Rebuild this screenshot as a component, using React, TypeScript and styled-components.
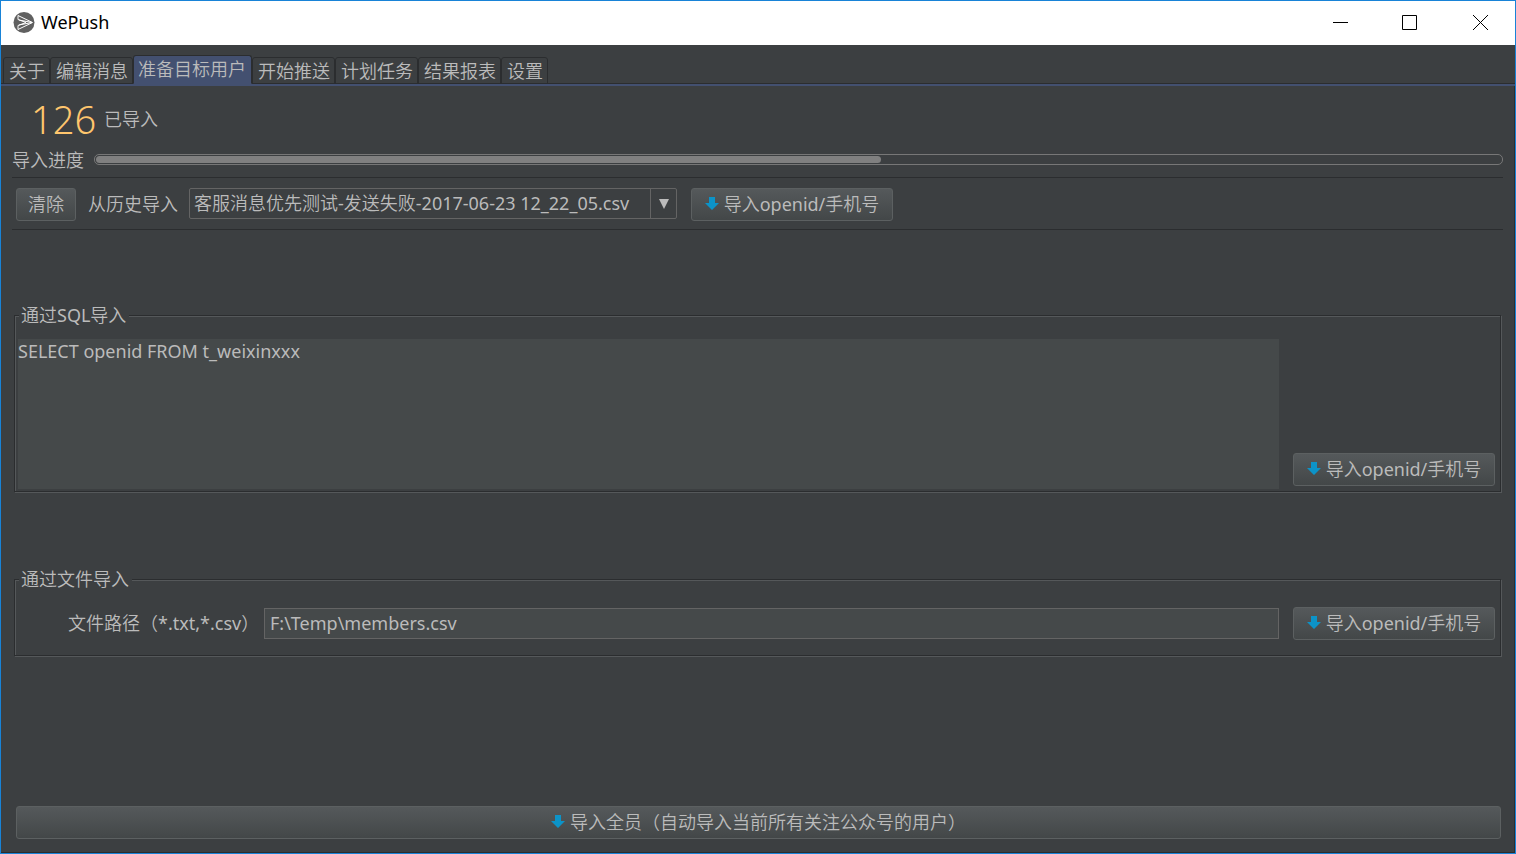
import React, { useState } from "react";
import styled, { createGlobalStyle, css } from "styled-components";

const FONT = `"Noto Sans", "Noto Sans CJK SC DemiLight", "Noto Sans CJK SC", sans-serif`;

const color = {
  frame: "#1883d7",
  bg: "#3c3f41",
  dark: "#2b2d2f",
  light: "#55585a",
  text: "#bbbbbb",
  accent: "#435070",
  count: "#ffc66d",
  field: "#45494a",
  fieldBorder: "#646464",
  buttonBorder: "#5c6061",
  blue: "#0c93c8",
};

const GlobalStyle = createGlobalStyle`
  * { box-sizing: border-box; }
  body { margin: 0; background: ${color.bg}; }
  body, button, input, select, textarea {
    font-family: ${FONT};
    font-size: 18px;
    font-weight: 400;
    line-height: 24px;
    color: ${color.text};
  }
`;

const Window = styled.div`
  display: flex;
  flex-direction: column;
  min-height: 100vh;
  border: 1px solid ${color.frame};
  background: ${color.bg};
`;

const TitleBar = styled.header`
  display: flex;
  align-items: center;
  height: 44px;
  padding-left: 12px;
  background: #ffffff;
  color: #000000;
`;

const Title = styled.h1`
  flex: 1;
  margin: 0 0 0 6px;
  padding-bottom: 2px;
  font-size: 18px;
  font-weight: 400;
  line-height: 24px;
`;

const WindowButton = styled.button`
  display: flex;
  align-items: center;
  justify-content: center;
  width: 70px;
  height: 44px;
  padding: 0;
  border: 0;
  background: transparent;
`;

const TabBar = styled.nav`
  display: flex;
  align-items: flex-end;
  height: 41px;
  padding-left: 2px;
  border-bottom: 2px solid ${color.accent};
  box-shadow: inset 0 -1px 0 ${color.dark};
`;

const Tab = styled.button<{ $active: boolean }>`
  height: 27px;
  padding: 0 4px 0 5px;
  border: 1px solid ${color.dark};
  border-radius: 3px 3px 0 0;
  background: transparent;
  white-space: nowrap;
  ${(p) =>
    p.$active &&
    css`
      height: 29px;
      padding: 0 5px 2px 4px;
      border-bottom-color: ${color.accent};
      background: ${color.accent};
    `}
`;

const Body = styled.main`
  display: flex;
  flex: 1;
  flex-direction: column;
  padding: 0 11px 13px;
  border: solid ${color.dark};
  border-width: 0 1px 1px 0;
`;

const CountRow = styled.div`
  display: flex;
  align-items: center;
  gap: 8px;
  height: 66px;
  padding-left: 19px;
`;

const Count = styled.strong`
  color: ${color.count};
  font-size: 38px;
  font-weight: 350;
  line-height: 48px;
`;

const ProgressRow = styled.label`
  display: flex;
  align-items: center;
  gap: 10px;
  height: 16px;
  margin-bottom: 9px;
  white-space: nowrap;
`;

const Progress = styled.progress`
  flex: 1;
  min-width: 0;
  height: 11px;
  margin-bottom: 1px;
  padding: 1px;
  border: 1px solid #777777;
  border-radius: 5px;
  background: transparent;
  appearance: none;

  &::-webkit-progress-bar {
    background: transparent;
  }
  &::-webkit-progress-value {
    border-radius: 4px;
    background: #808080;
  }
`;

const Toolbar = styled.div`
  display: flex;
  align-items: center;
  padding: 10px 4px 8px;
  border: solid ${color.dark};
  border-width: 1px 0;
`;

const Button = styled.button<{ $wide?: boolean }>`
  display: flex;
  align-items: center;
  justify-content: center;
  gap: 5px;
  min-width: ${(p) => (p.$wide ? "202px" : "0")};
  height: 33px;
  padding: 0 11px 2px;
  border: 1px solid ${color.buttonBorder};
  border-radius: 3px;
  background: linear-gradient(#55595b, #434748);
  white-space: nowrap;
`;

const HistoryLabel = styled.label`
  margin: 0 11px 0 12px;
  padding-bottom: 2px;
  white-space: nowrap;
`;

const SelectBox = styled.div`
  position: relative;
  width: 488px;
  height: 31px;
  margin: 0 14px 2px 0;
`;

const Select = styled.select`
  width: 100%;
  height: 100%;
  padding: 0 27px 2px 4px;
  border: 1px solid ${color.fieldBorder};
  border-radius: 2px;
  background: ${color.bg};
  appearance: none;
`;

const SelectArrow = styled.span`
  position: absolute;
  top: 1px;
  right: 1px;
  bottom: 1px;
  display: flex;
  align-items: center;
  justify-content: center;
  width: 26px;
  border-left: 1px solid ${color.fieldBorder};
  pointer-events: none;
`;

const Group = styled.fieldset<{ $space: string; $padding: string }>`
  display: flex;
  min-width: 0;
  margin: ${(p) => p.$space};
  padding: ${(p) => p.$padding};
  border: 1px solid ${color.dark};
  box-shadow: inset 1px 1px 0 ${color.light}, 1px 1px 0 ${color.light};
`;

const Legend = styled.legend`
  margin-left: 3px;
  padding: 0 3px 0 2px;
  background: ${color.bg};
  line-height: 20px;
`;

const GroupRow = styled.div<{ $align: string }>`
  display: flex;
  flex: 1;
  align-items: ${(p) => p.$align};
  gap: 14px;
`;

const SqlArea = styled.textarea`
  flex: 1;
  min-width: 0;
  height: 150px;
  margin-left: 2px;
  padding: 0;
  border: 0;
  background: ${color.field};
  resize: none;
`;

const SqlAction = styled.div`
  padding-bottom: 3px;
`;

const PathField = styled.div`
  display: flex;
  flex: 1;
  align-items: center;
  min-width: 0;
`;

const PathLabel = styled.label`
  width: 248px;
  padding: 0 0 2px 52px;
  white-space: nowrap;
`;

const PathInput = styled.input`
  flex: 1;
  min-width: 0;
  height: 31px;
  padding: 0 5px 2px;
  border: 1px solid ${color.fieldBorder};
  background: ${color.field};
`;

const AllUsers = styled.div`
  display: grid;
  margin: auto 2px 0 4px;
`;

const DownIcon = () => (
  <svg width="14" height="14" viewBox="0 0 14 14" aria-hidden="true">
    <path d="M4 0h6v6h4L7 13 0 6h4z" fill={color.blue} />
  </svg>
);

const Logo = () => (
  <svg width="22" height="22" viewBox="0 0 22 22" aria-hidden="true">
    <circle cx="11" cy="10.5" r="10.5" fill="#606060" />
    <path
      d="M5 3.5 19.5 10.5 5 17.5V13.5L13 10.5 5 7.5ZM6 8 19 10.5 6 13"
      fill="none"
      stroke="#ffffff"
      strokeWidth="1"
    />
  </svg>
);

const TABS = ["关于", "编辑消息", "准备目标用户", "开始推送", "计划任务", "结果报表", "设置"];

const ImportButton = () => (
  <Button type="button" $wide>
    <DownIcon />
    导入openid/手机号
  </Button>
);

export default function App() {
  const [active, setActive] = useState("准备目标用户");
  return (
    <>
      <GlobalStyle />
      <Window>
        <TitleBar>
          <Logo />
          <Title>WePush</Title>
          <WindowButton type="button" aria-label="最小化">
            <svg width="16" height="16" viewBox="0 0 16 16" stroke="#000">
              <path d="M1 7.5h15" />
            </svg>
          </WindowButton>
          <WindowButton type="button" aria-label="最大化">
            <svg width="16" height="16" viewBox="0 0 16 16" stroke="#000" fill="none">
              <path d="M.5 .5h14v14H.5z" />
            </svg>
          </WindowButton>
          <WindowButton type="button" aria-label="关闭">
            <svg width="16" height="16" viewBox="0 0 16 16" stroke="#000">
              <path d="M1 0l15 15M16 0l-15 15" />
            </svg>
          </WindowButton>
        </TitleBar>
        <TabBar>
          {TABS.map((name) => (
            <Tab key={name} type="button" $active={name === active} onClick={() => setActive(name)}>
              {name}
            </Tab>
          ))}
        </TabBar>
        <Body>
          <CountRow>
            <Count>126</Count>
            <span>已导入</span>
          </CountRow>
          <ProgressRow>
            导入进度
            <Progress max={1000} value={559} />
          </ProgressRow>
          <Toolbar>
            <Button type="button">清除</Button>
            <HistoryLabel htmlFor="history">从历史导入</HistoryLabel>
            <SelectBox>
              <Select id="history">
                <option>客服消息优先测试-发送失败-2017-06-23 12_22_05.csv</option>
              </Select>
              <SelectArrow>
                <svg width="10" height="10" viewBox="0 0 10 10" aria-hidden="true">
                  <path d="M0 0h10L5 10z" fill={color.text} />
                </svg>
              </SelectArrow>
            </SelectBox>
            <ImportButton />
          </Toolbar>
          <Group $space="auto 2px" $padding="14px 5px 2px 1px">
            <Legend>通过SQL导入</Legend>
            <GroupRow $align="flex-end">
              <SqlArea aria-label="SQL" defaultValue="SELECT openid FROM t_weixinxxx" spellCheck={false} />
              <SqlAction>
                <ImportButton />
              </SqlAction>
            </GroupRow>
          </Group>
          <Group $space="2px 2px auto" $padding="18px 5px 15px 1px">
            <Legend>通过文件导入</Legend>
            <GroupRow $align="center">
              <PathField>
                <PathLabel htmlFor="path">文件路径（*.txt,*.csv）</PathLabel>
                <PathInput id="path" defaultValue="F:\Temp\members.csv" spellCheck={false} />
              </PathField>
              <ImportButton />
            </GroupRow>
          </Group>
          <AllUsers>
            <Button type="button">
              <DownIcon />
              导入全员（自动导入当前所有关注公众号的用户）
            </Button>
          </AllUsers>
        </Body>
      </Window>
    </>
  );
}
